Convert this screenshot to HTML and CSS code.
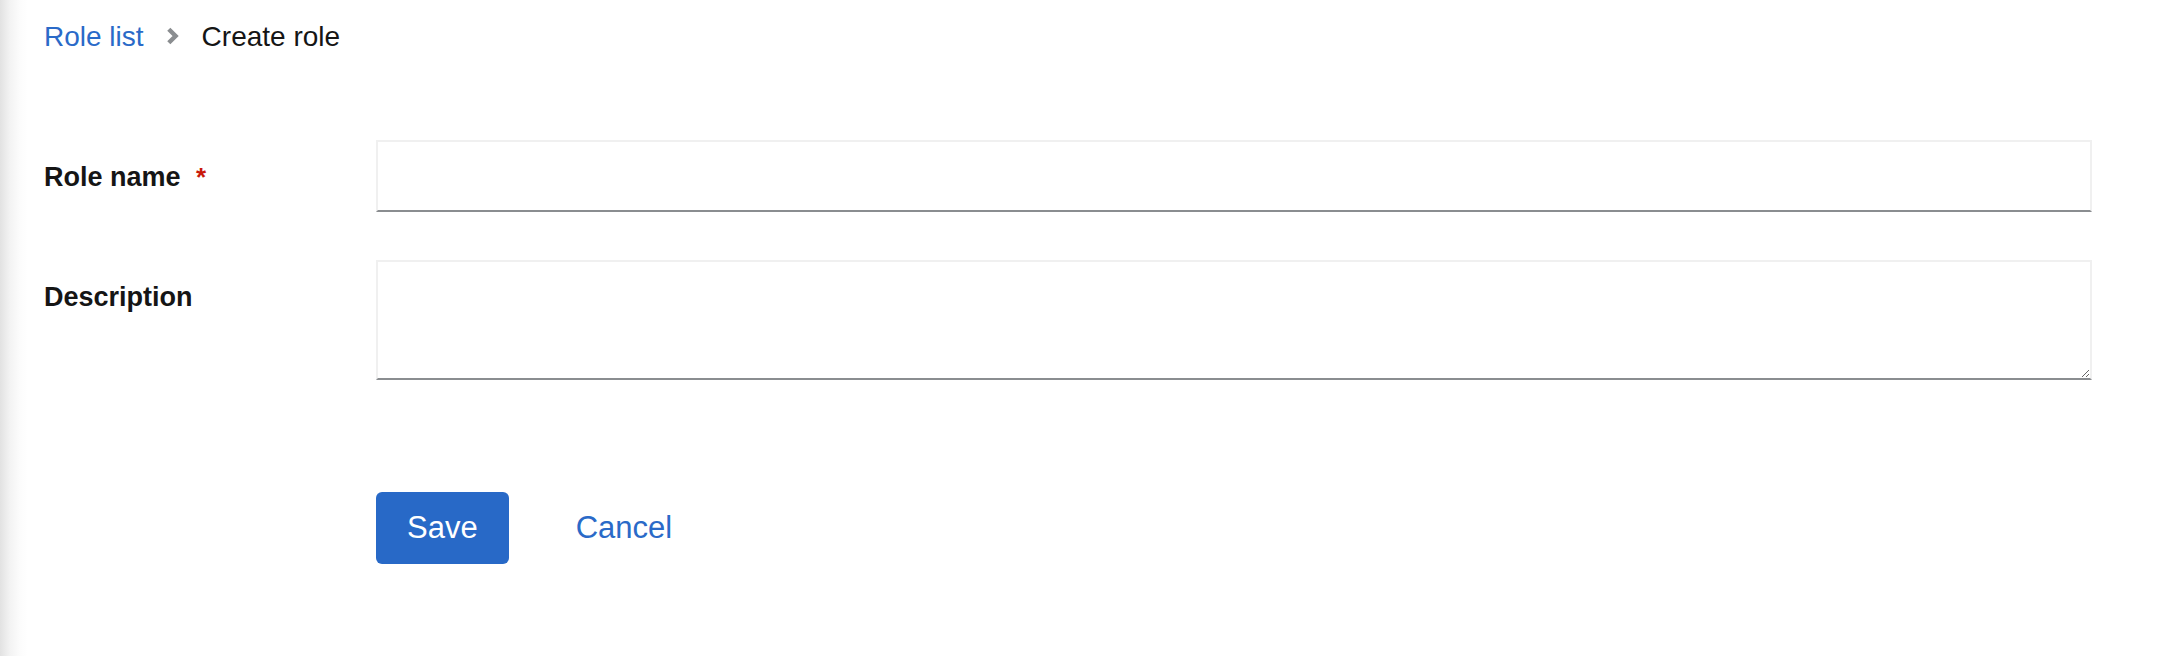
FILE: index.html
```html
<!DOCTYPE html>
<html lang="en">

<head>
    <meta charset="UTF-8">
    <meta name="viewport" content="width=device-width, initial-scale=1.0">
    <title>Create role</title>
    <link rel="stylesheet" href="styles.css">
</head>

<body>
    <div class="page">
        <nav class="breadcrumb">
            <a class="breadcrumb-link" href="#">Role list</a>
            <svg class="breadcrumb-divider" width="13" height="18" viewBox="0 0 13 18">
                <path d="M2.8 2.2 L9.6 9 L2.8 15.8" fill="none" stroke="#8a8d90" stroke-width="4.4" />
            </svg>
            <span class="breadcrumb-current">Create role</span>
        </nav>

        <form class="role-form">
            <label class="form-label" for="role-name">
                Role name <span class="required">*</span>
            </label>
            <input class="form-input" id="role-name" type="text">

            <label class="form-label" for="role-description">Description</label>
            <textarea class="form-textarea" id="role-description"></textarea>

            <div class="form-actions">
                <button class="btn btn-primary" type="button">Save</button>
                <button class="btn btn-link" type="button">Cancel</button>
            </div>
        </form>
    </div>
</body>

</html>
```

FILE: styles.css
```css
html,
body {
    margin: 0;
    height: 100%;
}

body {
    font-family: "Liberation Sans", Arial, sans-serif;
    color: #151515;
    background: linear-gradient(to right, #e2e2e2 0, #f3f3f3 10px, #fcfcfc 20px, #fff 28px);
}

.page {
    padding: 16px 68px 0 44px;
}

/* Breadcrumb */

.breadcrumb {
    display: flex;
    align-items: center;
    font-size: 28px;
    line-height: 42px;
}

.breadcrumb-link {
    color: #2a6ac8;
    text-decoration: none;
}

.breadcrumb-divider {
    margin: 0 23px 0 22px;
    position: relative;
    top: -1px;
}

.breadcrumb-current {
    color: #151515;
}

/* Form */

.role-form {
    display: grid;
    grid-template-columns: 332px 1fr;
    row-gap: 48px;
    margin-top: 82px;
}

.form-label {
    padding-top: 16px;
    font-size: 27px;
    line-height: 42px;
    font-weight: bold;
}

.required {
    color: #c9190b;
    margin-left: 8px;
    font-size: 26px;
}

.form-input,
.form-textarea {
    box-sizing: border-box;
    width: 100%;
    margin: 0;
    padding: 10px 16px;
    border: 2px solid #f0f0f0;
    border-bottom-color: #8a8d90;
    background: #fff;
    font-family: inherit;
    font-size: 32px;
    outline: none;
}

.form-input {
    height: 72px;
}

.form-textarea {
    height: 120px;
    resize: vertical;
}

.form-actions {
    grid-column: 2;
    display: flex;
    margin-top: 64px;
}

.btn {
    height: 72px;
    padding: 0 31px;
    border: none;
    border-radius: 6px;
    font-family: inherit;
    font-size: 31px;
    cursor: pointer;
}

.btn-primary {
    background: #2869c7;
    color: #fff;
}

.btn-link {
    margin-left: 36px;
    background: none;
    color: #2a6ac8;
}
```
